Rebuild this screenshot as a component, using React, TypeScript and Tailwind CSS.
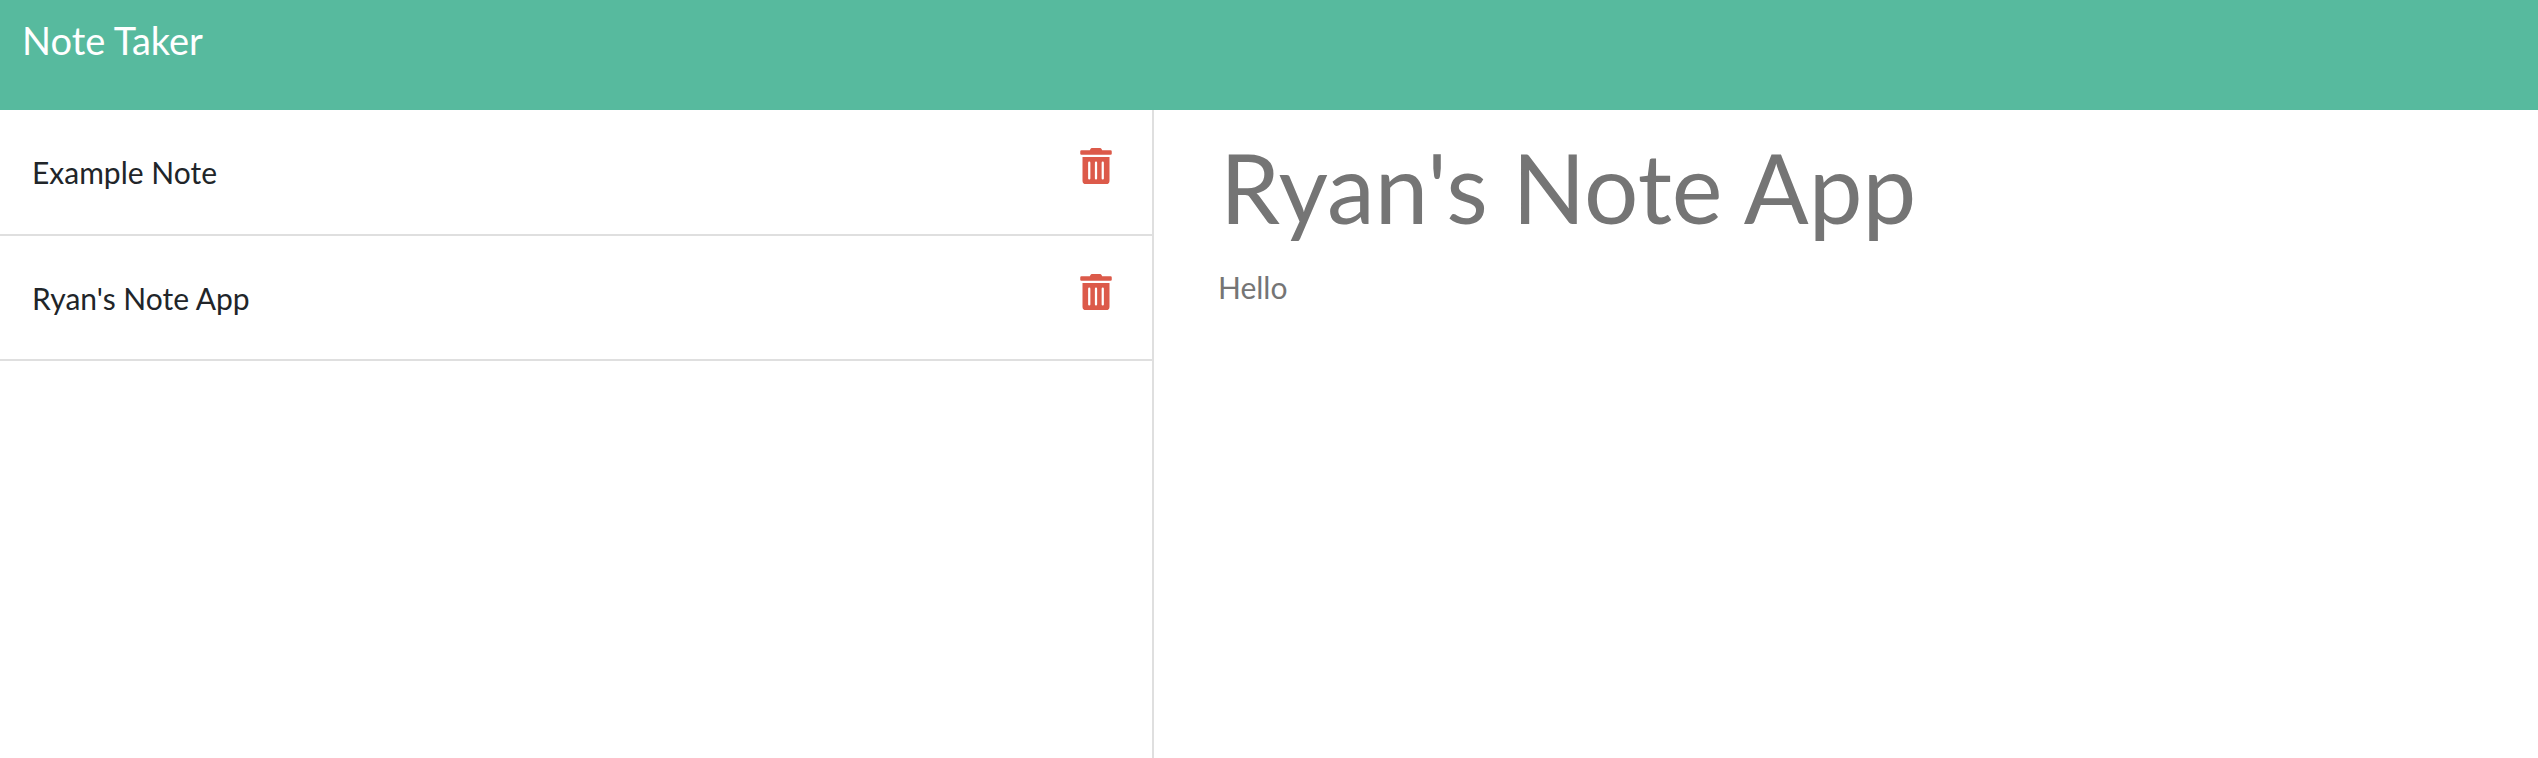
import { FaTrashAlt } from 'react-icons/fa'

const notes = ['Example Note', "Ryan's Note App"]

export default function App() {
  return (
    <div className="flex h-[758px] flex-col bg-white font-['Lato',sans-serif]">
      <nav className="h-[110px] shrink-0 bg-[#57ba9e] px-[22px] pt-[15px]">
        <span className="text-[38px] leading-[50px] text-white">Note Taker</span>
      </nav>

      <div className="flex min-h-0 flex-1">
        <div className="w-[1154px] shrink-0 border-r-2 border-[#dfdfdf]">
          <ul>
            {notes.map((note) => (
              <li key={note} className="flex h-[125.5px] items-start justify-between border-b-2 border-[#dfdfdf] pr-[38px] pl-[32px]">
                <span className="pt-[40px] text-[30px] leading-[45px] text-[#212529]">{note}</span>
                <FaTrashAlt className="mt-[38px] text-[36px] text-[#dc5a4a]" />
              </li>
            ))}
          </ul>
        </div>

        <main className="flex-1 pl-[66px]">
          <h1 className="pt-[19px] text-[96px] leading-[115px] font-normal text-[#757575]">Ryan's Note App</h1>
          <p className="-ml-[2px] pt-[21px] text-[30px] leading-[45px] text-[#757575]">Hello</p>
        </main>
      </div>
    </div>
  )
}
